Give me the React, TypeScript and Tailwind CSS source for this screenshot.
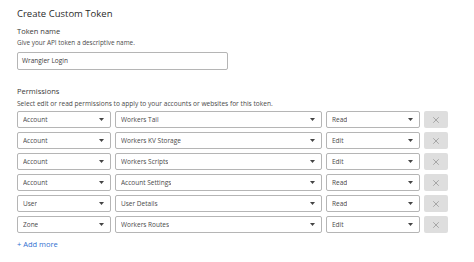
import { X } from 'lucide-react';

type Row = { scope: string; item: string; access: string };

const rows: Row[] = [
  { scope: 'Account', item: 'Workers Tail', access: 'Read' },
  { scope: 'Account', item: 'Workers KV Storage', access: 'Edit' },
  { scope: 'Account', item: 'Workers Scripts', access: 'Edit' },
  { scope: 'Account', item: 'Account Settings', access: 'Read' },
  { scope: 'User', item: 'User Details', access: 'Read' },
  { scope: 'Zone', item: 'Workers Routes', access: 'Edit' },
];

function Caret() {
  return (
    <svg width="5" height="3" viewBox="0 0 5 3" className="shrink-0">
      <path d="M0 0h5L2.5 3z" fill="#444" />
    </svg>
  );
}

function FakeSelect({ value }: { value: string }) {
  return (
    <div className="flex h-[17px] items-center justify-between rounded-[2px] border border-[#b5b5b5] bg-white pl-[5px] pr-[6px]">
      <span className="truncate text-[6.5px] text-[#4a4a4a]">{value}</span>
      <Caret />
    </div>
  );
}

export default function App() {
  return (
    <div
      className="h-[262px] w-[474px] bg-white pl-[17px] text-[#313131]"
      style={{ fontFamily: '"Open Sans", "Noto Sans", sans-serif' }}
    >
      <h1 className="pt-[7px] text-[9.5px] leading-[14px] text-[#2a2a2a]">Create Custom Token</h1>

      <div className="mt-[5px] text-[7.5px] leading-[11px] text-[#3a3a3a]">Token name</div>
      <p className="mt-[1px] text-[6.4px] leading-[9px] text-[#4a4a4a]">Give your API token a descriptive name.</p>
      <div className="mt-[5px] flex h-[18px] w-[211px] items-center rounded-[2px] border border-[#b5b5b5] px-[4px] text-[6.5px] text-[#3a3a3a]">
        Wrangler Login
      </div>

      <div className="mt-[16px] text-[7.5px] leading-[11px] text-[#3a3a3a]">Permissions</div>
      <p className="mt-[2px] text-[6.6px] leading-[9px] text-[#4a4a4a]">
        Select edit or read permissions to apply to your accounts or websites for this token.
      </p>

      <div className="mt-[3px] grid grid-cols-[94px_207px_94px_24px] gap-x-[4px] gap-y-[4px]">
        {rows.map((r, i) => (
          <div key={i} className="contents">
            <FakeSelect value={r.scope} />
            <FakeSelect value={r.item} />
            <FakeSelect value={r.access} />
            <button className="flex h-[17px] items-center justify-center rounded-[2px] bg-[#dedede]">
              <X size={10} strokeWidth={1.1} color="#666" />
            </button>
          </div>
        ))}
      </div>

      <div className="mt-[6px] text-[7.5px] text-[#2f6fd0]">+ Add more</div>
    </div>
  );
}
